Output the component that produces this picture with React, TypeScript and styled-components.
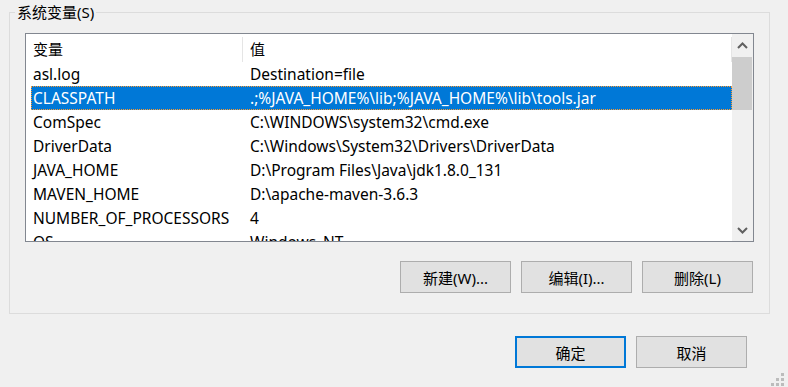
import styled, { createGlobalStyle } from "styled-components";

const GlobalStyle = createGlobalStyle`
    html, body {
        margin: 0;
        padding: 0;
        background: #f0f0f0;
    }
    body {
        font-family: "Noto Sans", "Noto Sans CJK SC", sans-serif;
        font-size: 15px;
        color: #000;
    }
`;

interface IVariable {
    name: string;
    value: string;
}

const variables: IVariable[] = [
    { name: "asl.log", value: "Destination=file" },
    { name: "CLASSPATH", value: ".;%JAVA_HOME%\\lib;%JAVA_HOME%\\lib\\tools.jar" },
    { name: "ComSpec", value: "C:\\WINDOWS\\system32\\cmd.exe" },
    { name: "DriverData", value: "C:\\Windows\\System32\\Drivers\\DriverData" },
    { name: "JAVA_HOME", value: "D:\\Program Files\\Java\\jdk1.8.0_131" },
    { name: "MAVEN_HOME", value: "D:\\apache-maven-3.6.3" },
    { name: "NUMBER_OF_PROCESSORS", value: "4" },
    { name: "OS", value: "Windows_NT" },
];

const Window = styled.div`
    position: relative;
    width: 788px;
    height: 387px;
    box-sizing: border-box;
    padding-top: 2px;
    overflow: hidden;
`;

const GroupBox = styled.fieldset`
    margin: 0 0 0 9px;
    width: 761px;
    box-sizing: border-box;
    border: 1px solid #dcdcdc;
    padding: 11px 15px 20px 15px;
    min-width: 0;
`;

const Legend = styled.legend`
    margin-left: -10px;
    padding: 0 2px;
    line-height: 20px;
    font-size: 15px;
`;

const ListBox = styled.div`
    height: 209px;
    box-sizing: border-box;
    border: 1px solid #828790;
    background: #fff;
    display: flex;
    overflow: hidden;
    font-size: 15.5px;
`;

const ListContent = styled.div`
    flex: 1;
    display: flex;
    flex-direction: column;
    overflow: hidden;
`;

const Header = styled.div`
    height: 28px;
    flex-shrink: 0;
    display: grid;
    grid-template-columns: 217px 1fr;
`;

const HeaderCell = styled.div`
    margin-top: 3px;
    height: 25px;
    line-height: 25px;
    padding-left: 7px;
    border-right: 1px solid #e5e5e5;
    white-space: nowrap;
    font-size: 15px;
`;

const Rows = styled.div`
    padding-left: 5px;
    display: flex;
    flex-direction: column;
`;

const Row = styled.div<{ $selected?: boolean }>`
    height: 24px;
    flex-shrink: 0;
    display: grid;
    grid-template-columns: 212px 1fr;
    align-items: center;
    background: ${(p) => (p.$selected ? "#0078d7" : "transparent")};
    color: ${(p) => (p.$selected ? "#fff" : "#000")};
    outline: ${(p) => (p.$selected ? "1px dotted #ff9a2e" : "none")};
    outline-offset: -1px;
`;

const NameCell = styled.div`
    padding-left: 2px;
    white-space: nowrap;
    overflow: hidden;
`;

const ValueCell = styled.div`
    padding-left: 7px;
    white-space: nowrap;
    overflow: hidden;
`;

const ScrollBar = styled.div`
    width: 21px;
    flex-shrink: 0;
    background: #f0f0f0;
    display: flex;
    flex-direction: column;
`;

const ArrowButton = styled.div`
    height: 22px;
    flex-shrink: 0;
    display: flex;
    align-items: center;
    justify-content: center;
`;

const Track = styled.div`
    flex: 1;
    display: flex;
    flex-direction: column;
`;

const Thumb = styled.div`
    margin-top: 1px;
    margin-right: 1px;
    height: 53px;
    background: #cdcdcd;
`;

const ButtonRow = styled.div<{ $pad?: string }>`
    display: flex;
    justify-content: flex-end;
    gap: 10px;
    padding: ${(p) => p.$pad || "0"};
`;

const Button = styled.button<{ $default?: boolean }>`
    width: 111px;
    height: 32px;
    box-sizing: border-box;
    margin: 0;
    padding: 0;
    background: #e1e1e1;
    border: ${(p) => (p.$default ? "2px solid #0078d7" : "1px solid #adadad")};
    border-radius: 0;
    font-family: "Noto Sans", "Noto Sans CJK SC", sans-serif;
    font-size: 15px;
    color: #000;
`;

const Grip = styled.svg`
    position: absolute;
    right: 4px;
    bottom: 1px;
`;

function Chevron(props: { up?: boolean }) {
    return (
        <svg width="11" height="7" viewBox="0 0 11 7">
            <polyline
                points={props.up ? "1,6 5.5,1.5 10,6" : "1,1 5.5,5.5 10,1"}
                fill="none"
                stroke="#606060"
                strokeWidth="2"
            />
        </svg>
    );
}

export default function App() {
    return (
        <>
            <GlobalStyle />
            <Window>
                <GroupBox>
                    <Legend>系统变量(S)</Legend>
                    <ListBox>
                        <ListContent>
                            <Header>
                                <HeaderCell>变量</HeaderCell>
                                <HeaderCell>值</HeaderCell>
                            </Header>
                            <Rows>
                                {variables.map((v) => (
                                    <Row key={v.name} $selected={v.name === "CLASSPATH"}>
                                        <NameCell>{v.name}</NameCell>
                                        <ValueCell>{v.value}</ValueCell>
                                    </Row>
                                ))}
                            </Rows>
                        </ListContent>
                        <ScrollBar>
                            <ArrowButton>
                                <Chevron up />
                            </ArrowButton>
                            <Track>
                                <Thumb />
                            </Track>
                            <ArrowButton>
                                <Chevron />
                            </ArrowButton>
                        </ScrollBar>
                    </ListBox>
                    <ButtonRow $pad="19px 1px 0 0">
                        <Button>新建(W)...</Button>
                        <Button>编辑(I)...</Button>
                        <Button>删除(L)</Button>
                    </ButtonRow>
                </GroupBox>
                <ButtonRow $pad="22px 41px 0 0">
                    <Button $default>确定</Button>
                    <Button>取消</Button>
                </ButtonRow>
                <Grip width="13" height="13" viewBox="0 0 13 13">
                    <rect x="10" y="0" width="3" height="3" fill="#bcbcbc" />
                    <rect x="5" y="5" width="3" height="3" fill="#bcbcbc" />
                    <rect x="10" y="5" width="3" height="3" fill="#bcbcbc" />
                    <rect x="0" y="10" width="3" height="3" fill="#bcbcbc" />
                    <rect x="5" y="10" width="3" height="3" fill="#bcbcbc" />
                    <rect x="10" y="10" width="3" height="3" fill="#bcbcbc" />
                </Grip>
            </Window>
        </>
    );
}
